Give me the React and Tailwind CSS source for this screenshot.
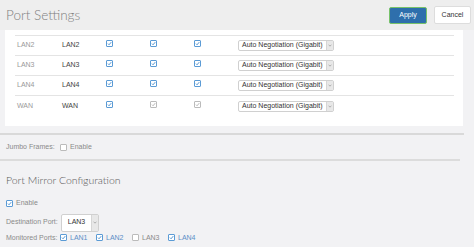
const PORTS = [
    { id: 'LAN2', name: 'LAN2', c: [true, true, true] },
    { id: 'LAN3', name: 'LAN3', c: [true, true, true] },
    { id: 'LAN4', name: 'LAN4', c: [true, true, true] },
    { id: 'WAN', name: 'WAN', c: [true, false, false], disabled: true },
];

function Check({ on = true, muted = false }) {
    return (
        <span
            className={`inline-flex h-[7px] w-[7px] flex-shrink-0 items-center justify-center rounded-[1px] border bg-white ${
                muted ? 'border-[#bbbbbb]' : 'border-[#5b9bd5]'
            }`}
        >
            {on && (
                <svg viewBox="0 0 8 8" className="h-[7px] w-[7px]">
                    <path
                        d="M1.5 4.2 L3.3 6 L6.8 1.8"
                        fill="none"
                        stroke={muted ? '#a8a8a8' : '#2f7fc8'}
                        strokeWidth="1.3"
                    />
                </svg>
            )}
        </span>
    );
}

function Select({ value, className = '', center = false }) {
    return (
        <div className={`flex items-stretch rounded-[2px] border border-[#d0d0d0] bg-white ${className}`}>
            <span className={`flex flex-1 items-center px-[3px] text-[7px] text-[#333] ${center ? 'justify-center' : ''}`}>
                {value}
            </span>
            <span className="flex w-[7px] items-center justify-center border-l border-[#d6d6d6] bg-[#e8e8e8]">
                <svg viewBox="0 0 6 4" className="h-[3px] w-[4px]">
                    <path d="M0.8 0.8 L3 3 L5.2 0.8" fill="none" stroke="#888" strokeWidth="0.9" />
                </svg>
            </span>
        </div>
    );
}

export default function App() {
    return (
        <div
            className="h-[247px] w-[474px] overflow-hidden bg-[#f2f2f4]"
            style={{ fontFamily: '"Liberation Sans", Arial, sans-serif' }}
        >
            {/* Header */}
            <div className="flex h-[30px] items-center justify-between bg-[#eeeeee] pl-[6px] pr-[3px]">
                <h1 className="text-[13.5px] text-[#808080]" style={{ fontFamily: 'Lato, "Liberation Sans", sans-serif', fontWeight: 300 }}>
                    Port Settings
                </h1>
                <div className="flex items-center gap-[7px]">
                    <button className="h-[17px] w-[38px] rounded-[2px] border border-[#77c26a] bg-[#2e6fac] text-[7px] text-white">
                        Apply
                    </button>
                    <button className="h-[18px] w-[37px] rounded-[2px] border border-[#dddddd] bg-white text-[7px] text-[#333]">
                        Cancel
                    </button>
                </div>
            </div>

            {/* Port table card */}
            <div className="mx-[5px] w-[458px] bg-white pb-[10px] pt-[5px]">
                <div className="ml-[10px] w-[439px] border-t border-[#e4e4e4]">
                    {PORTS.map((p, i) => (
                        <div
                            key={p.id}
                            className={`flex h-[20px] items-center text-[7px] ${
                                i < PORTS.length - 1 ? 'border-b border-[#e4e4e4]' : ''
                            }`}
                        >
                            <span className="w-[47px] pl-[2px] text-[#9a9a9a]">{p.id}</span>
                            <span className="w-[44px] text-[#444]">{p.name}</span>
                            <span className="w-[44px]"><Check on={p.c[0]} /></span>
                            <span className="w-[44px]"><Check on muted={p.disabled} /></span>
                            <span className="w-[44px]"><Check on muted={p.disabled} /></span>
                            <Select value="Auto Negotiation (Gigabit)" className="h-[11px] w-[96px]" />
                        </div>
                    ))}
                </div>
            </div>

            {/* Jumbo frames */}
            <div className="mt-[7px] w-[464px] border-t-2 border-[#d9d9d9]" />
            <div className="flex h-[24px] items-center gap-[6px] pl-[6px] text-[7px] text-[#8a8a8a]">
                <span className="w-[48px] whitespace-nowrap">Jumbo Frames:</span>
                <span className="flex items-center gap-[3px]">
                    <Check on={false} muted />
                    Enable
                </span>
            </div>
            <div className="w-[460px] border-t-2 border-[#dcdcdc]" />

            {/* Port mirror */}
            <div className="px-[6px]">
                <h2
                    className="pt-[12px] text-[10.5px] leading-[14px] text-[#555]"
                    style={{ fontFamily: 'Lato, "Liberation Sans", sans-serif', fontWeight: 300 }}
                >
                    Port Mirror Configuration
                </h2>
                <div className="mt-[11px] flex items-center gap-[3px] text-[7px] text-[#8a8a8a]">
                    <Check />
                    Enable
                </div>
                <div className="mt-[5px] flex items-center text-[7px] text-[#8a8a8a]">
                    <span className="w-[55px] whitespace-nowrap">Destination Port:</span>
                    <Select value="LAN3" center className="h-[18px] w-[38px]" />
                </div>
                <div className="mt-[1px] flex items-center text-[7px] text-[#8a8a8a]">
                    <span className="w-[54px] whitespace-nowrap">Monitored Ports:</span>
                    {[
                        ['LAN1', true],
                        ['LAN2', true],
                        ['LAN3', false],
                        ['LAN4', true],
                    ].map(([n, on]) => (
                        <span key={n} className="flex w-[36px] items-center gap-[3px]">
                            <Check on={on} muted={!on} />
                            <span className={on ? 'text-[#5b8fc7]' : 'text-[#8a8a8a]'}>{n}</span>
                        </span>
                    ))}
                </div>
            </div>
        </div>
    );
}
